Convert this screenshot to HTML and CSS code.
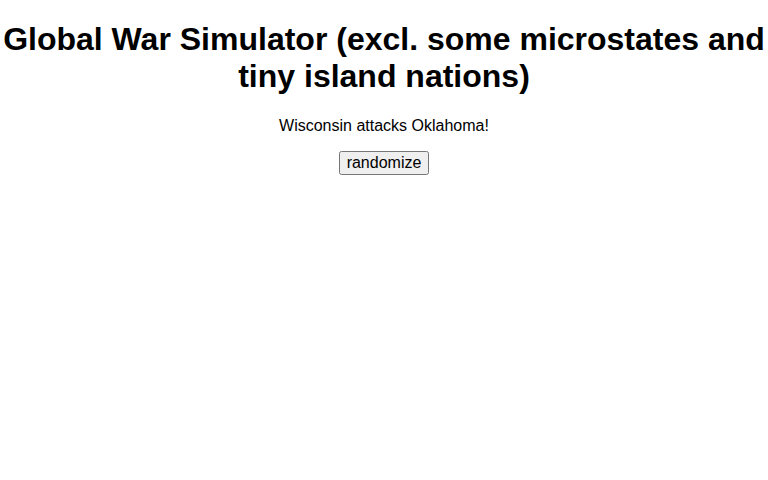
FILE: index.html
```html
<!DOCTYPE html>
<html lang="en">
<head>
    <meta charset="UTF-8">
    <meta name="viewport" content="width=device-width, initial-scale=1.0">
    <title>Global War Simulator</title>
    <link rel="stylesheet" href="styles.css">
</head>
<body>
    <h1>Global War Simulator (excl. some microstates and tiny island nations)</h1>
    <p id="result">Wisconsin attacks Oklahoma!</p>
    <button id="randomize" class="random-btn">randomize</button>
</body>
</html>
```

FILE: styles.css
```css
body {
    margin: 0;
    font-family: 'Liberation Sans', Arial, sans-serif;
    text-align: center;
    color: #000;
    background-color: #fff;
}

.random-btn {
    font-family: 'Liberation Sans', Arial, sans-serif;
    font-size: 16px;
}
```
